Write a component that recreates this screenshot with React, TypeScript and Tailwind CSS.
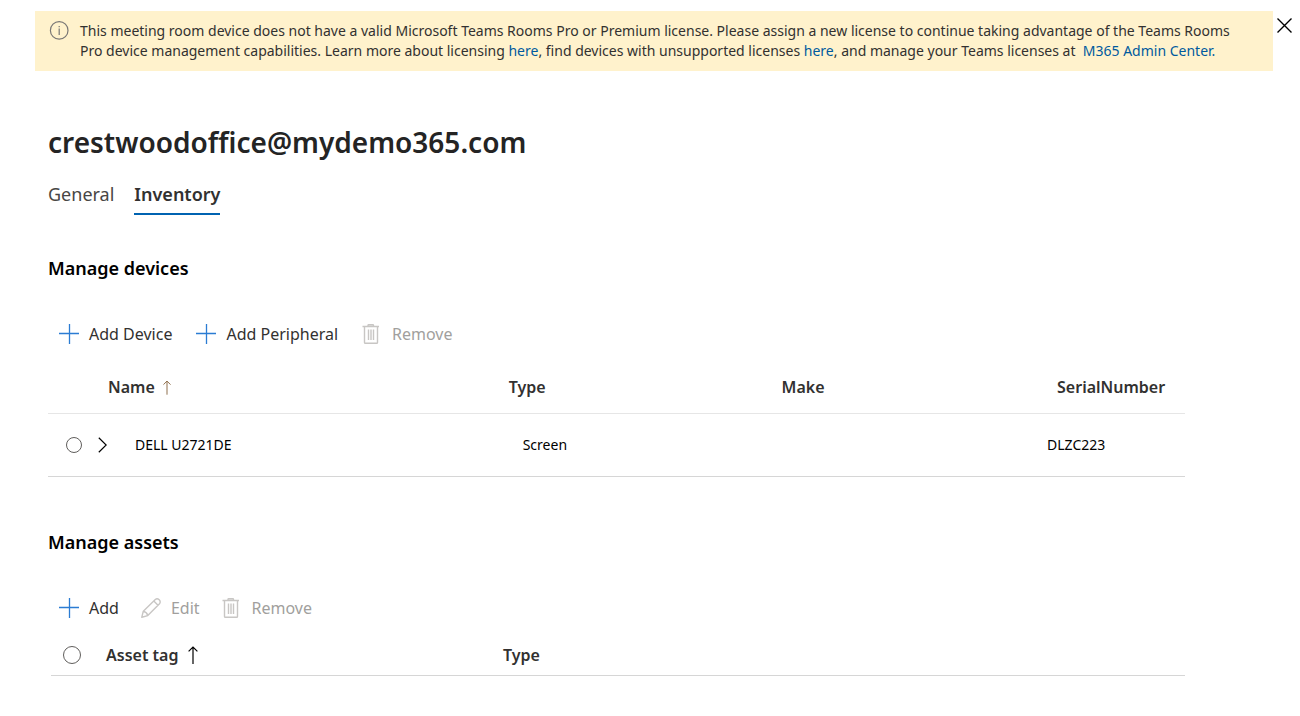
import type { ReactNode } from "react";

const iconClass = "size-5 shrink-0";

function PlusIcon() {
  return (
    <svg viewBox="0 0 20 20" className={iconClass} fill="none" aria-hidden="true">
      <path d="M0 9.5H20M10.5 0V20" stroke="#2b7cd3" strokeWidth="1.3" />
    </svg>
  );
}

function TrashIcon() {
  return (
    <svg viewBox="0 0 20 20" className={iconClass} fill="none" stroke="#c8c6c4" strokeWidth="1.4" aria-hidden="true">
      <path d="M.5 2.5H17M6 2.5V1.4Q6 .7 6.7 .7H10.8Q11.5 .7 11.5 1.4V2.5M2.5 2.5V18.4Q2.5 19.3 3.4 19.3H14.6Q15.5 19.3 15.5 18.4V2.5M6.5 5.5V16M9 5.5V16M11.5 5.5V16" />
    </svg>
  );
}

function PencilIcon() {
  return (
    <svg viewBox="0 0 20 20" className={iconClass} fill="none" stroke="#c8c6c4" strokeWidth="1.4" strokeLinejoin="round" aria-hidden="true">
      <path d="M.8 19.2L2.3 13.2L14.3 1.5Q16.2 0 18.2 1.8Q20 3.8 18.5 5.7L6.8 17.6ZM12.8 3L17 7.2M2.3 13.2Q5.9 14 6.8 17.6" />
    </svg>
  );
}

function InfoIcon() {
  return (
    <svg viewBox="0 0 20 20" className={iconClass} fill="none" stroke="#797775" aria-hidden="true">
      <circle cx="10.2" cy="9.4" r="8.8" strokeWidth="1.2" />
      <path d="M10.2 7.5V14M10.2 5V6.3" strokeWidth="1.2" />
    </svg>
  );
}

function ArrowUpIcon({ className }: { className: string }) {
  return (
    <svg viewBox="0 0 10 18" className={className} fill="none" strokeWidth="1.2" aria-hidden="true">
      <path d="M5 18V1M.6 5.4L5 1L9.4 5.4" />
    </svg>
  );
}

function ToolbarButton({ icon, label, disabled = false }: { icon: ReactNode; label: string; disabled?: boolean }) {
  return (
    <button
      type="button"
      disabled={disabled}
      className="flex items-center gap-2.5 text-[16px] leading-6 text-[#323130] disabled:text-[#a19f9d]"
    >
      {icon}
      {label}
    </button>
  );
}

const radioClass = "block appearance-none rounded-full border border-[#605e5c] bg-white checked:border-4";
const linkClass = "text-[#005a9e]";

export default function App() {
  return (
    <div className="min-h-screen bg-white pb-10 font-['Noto_Sans','Segoe_UI',sans-serif] text-[#323130]">
      <div className="flex items-start gap-1 pt-[11px] pr-2 pl-[35px]">
        <div role="status" className="flex flex-1 gap-[11px] bg-[#fff2cc] py-2.5 pr-8 pl-3.5">
          <InfoIcon />
          <p className="text-[14px] leading-5">
            This meeting room device does not have a valid Microsoft Teams Rooms Pro or Premium license. Please assign a
            new license to continue taking advantage of the Teams Rooms Pro device management capabilities. Learn more
            about licensing <a href="#licensing" className={linkClass}>here</a>, find devices with unsupported licenses{" "}
            <a href="#unsupported" className={linkClass}>here</a>, and manage your Teams licenses at &nbsp;
            <a href="#admin" className={linkClass}>M365 Admin Center.</a>
          </p>
        </div>
        <button type="button" aria-label="Close" className="mt-[7px]">
          <svg viewBox="0 0 15 15" className="size-[15px]" fill="none" stroke="#000" strokeWidth="1.4" aria-hidden="true">
            <path d="M.5 .5L14.5 14.5M14.5 .5L.5 14.5" />
          </svg>
        </button>
      </div>

      <main className="pr-[115px] pl-12">
        <h1 className="mt-[51px] text-[28px] leading-10 font-semibold text-[#242424]">crestwoodoffice@mydemo365.com</h1>

        <div role="tablist" className="mt-4 flex gap-5 text-[18px] leading-8">
          <button type="button" role="tab" aria-selected="false" className="border-b-2 border-transparent pb-[3px] text-[#484644]">
            General
          </button>
          <button type="button" role="tab" aria-selected="true" className="border-b-2 border-[#0063b1] pb-[3px] font-semibold">
            Inventory
          </button>
        </div>

        <section>
          <h2 className="mt-[39px] text-[18px] leading-7 font-semibold text-black">Manage devices</h2>
          <div className="mt-10 flex gap-6 pl-[11px]">
            <ToolbarButton icon={<PlusIcon />} label="Add Device" />
            <ToolbarButton icon={<PlusIcon />} label="Add Peripheral" />
            <ToolbarButton icon={<TrashIcon />} label="Remove" disabled />
          </div>
          <table className="mt-4 w-full table-fixed text-left">
            <thead>
              <tr className="h-[51px] border-b border-[#e6e6e6] text-[16px] leading-6">
                <td className="w-10" />
                <th scope="col" className="w-[37%] pl-5 font-semibold">
                  <span className="flex items-center gap-2">
                    Name
                    <ArrowUpIcon className="h-[15px] w-2 stroke-[#8a6a45]" />
                  </span>
                </th>
                <th scope="col" className="w-[24%] font-semibold">Type</th>
                <th scope="col" className="w-[23%] font-semibold">Make</th>
                <th scope="col" className="pl-3.5 font-semibold">SerialNumber</th>
              </tr>
            </thead>
            <tbody>
              <tr className="h-[63px] border-b border-[#d6d6d6] text-[14px] leading-5 text-black">
                <td className="pl-[18px]">
                  <input type="radio" name="device" aria-label="Select DELL U2721DE" className={`${radioClass} size-4`} />
                </td>
                <td className="pl-2.5">
                  <span className="flex items-center gap-7">
                    <button type="button" aria-label="Expand DELL U2721DE">
                      <svg viewBox="0 0 9 16" className="h-4 w-[9px]" fill="none" stroke="#000" strokeWidth="1.2" aria-hidden="true">
                        <path d="M.8 .8L8.2 8L.8 15.2" />
                      </svg>
                    </button>
                    DELL U2721DE
                  </span>
                </td>
                <td className="pl-3.5">Screen</td>
                <td />
                <td className="pl-1">DLZC223</td>
              </tr>
            </tbody>
          </table>
        </section>

        <section>
          <h2 className="mt-[51px] text-[18px] leading-7 font-semibold text-black">Manage assets</h2>
          <div className="mt-10 flex gap-[22px] pl-[11px]">
            <ToolbarButton icon={<PlusIcon />} label="Add" />
            <ToolbarButton icon={<PencilIcon />} label="Edit" disabled />
            <ToolbarButton icon={<TrashIcon />} label="Remove" disabled />
          </div>
          <div className="mt-4 pl-[3px]">
            <table className="w-full table-fixed text-left">
              <thead>
                <tr className="h-10 border-b border-[#d6d6d6] text-[16px] leading-6">
                  <td className="w-[55px] pl-3">
                    <input type="radio" name="asset" aria-label="Select asset" className={`${radioClass} size-[18px]`} />
                  </td>
                  <th scope="col" className="w-[35%] font-semibold">
                    <span className="flex items-center gap-2.5">
                      Asset tag
                      <ArrowUpIcon className="h-[18px] w-2.5 stroke-black" />
                    </span>
                  </th>
                  <th scope="col" className="font-semibold">Type</th>
                </tr>
              </thead>
            </table>
          </div>
        </section>
      </main>
    </div>
  );
}
